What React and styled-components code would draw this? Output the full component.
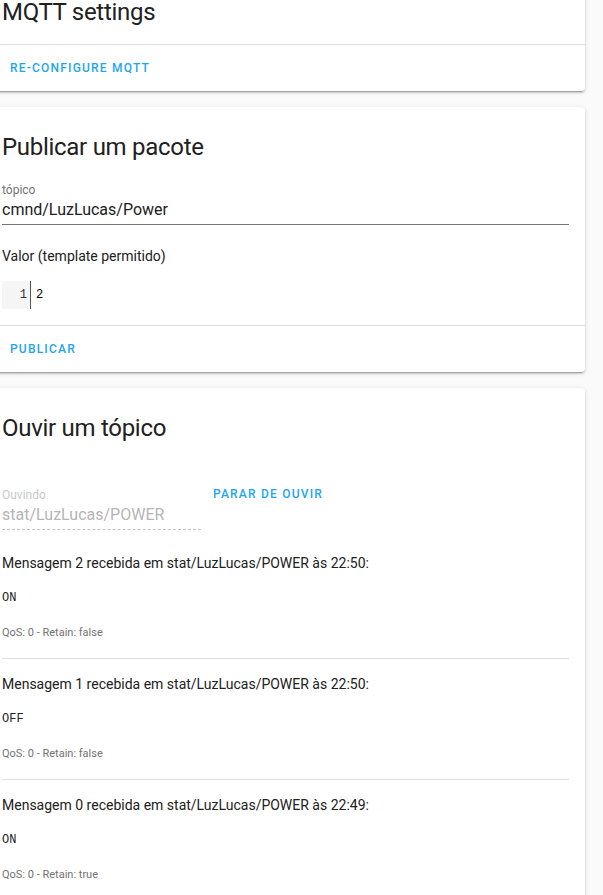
import React from "react";
import styled, { createGlobalStyle } from "styled-components";

const GlobalStyle = createGlobalStyle`
  html, body {
    margin: 0;
    padding: 0;
    background: #fafafa;
  }
  body {
    font-family: Roboto, "Noto Sans", Arial, sans-serif;
    color: #212121;
    overflow: hidden;
    -webkit-font-smoothing: antialiased;
  }
  * { box-sizing: border-box; }
`;

const Page = styled.main`
  display: flex;
  flex-direction: column;
  gap: 16px;
  width: 599px;
  margin: -28px 0 0 -14px;
`;

const Card = styled.section`
  background: #fff;
  border-radius: 4px;
  box-shadow: 0 2px 2px 0 rgba(0, 0, 0, 0.14), 0 1px 5px 0 rgba(0, 0, 0, 0.12),
    0 3px 1px -2px rgba(0, 0, 0, 0.2);
`;

const CardHeader = styled.h2`
  margin: 0;
  padding: 24px 16px 16px;
  font-size: 24px;
  line-height: 32px;
  font-weight: 400;
  letter-spacing: -0.012em;
  color: #212121;
`;

const CardContent = styled.div`
  padding: ${(p) => p.$top || 0}px 16px 16px;
`;

const CardActions = styled.div`
  display: flex;
  border-top: 1px solid #e0e0e0;
  padding: 5px 16px;
`;

const TextButton = styled.button`
  display: inline-flex;
  align-items: center;
  flex: none;
  height: 36px;
  padding: 0 8px;
  border: 0;
  background: transparent;
  font-family: Roboto, "Noto Sans", Arial, sans-serif;
  font-size: 12px;
  font-weight: 500;
  letter-spacing: 1.2px;
  text-transform: uppercase;
  color: #1ea5f0;
  cursor: pointer;
`;

const Field = styled.div`
  width: ${(p) => (p.$width ? `${p.$width}px` : "auto")};
  flex: none;
  padding-top: ${(p) => p.$top}px;
  padding-bottom: 2px;
  border-bottom: 1px ${(p) => (p.$disabled ? "dashed #c4c4c4" : "solid #757575")};
`;

const FieldLabel = styled.div`
  font-size: 12px;
  line-height: 16px;
  color: ${(p) => (p.$disabled ? "#c8c8c8" : "#737373")};
`;

const FieldValue = styled.div`
  font-size: 16px;
  line-height: 24px;
  color: ${(p) => (p.$disabled ? "#b5b5b5" : "#212121")};
  white-space: nowrap;
`;

const SectionLabel = styled.div`
  margin-top: 21px;
  font-size: 14px;
  line-height: 20px;
  color: #212121;
`;

const Editor = styled.div`
  display: flex;
  margin-top: 15px;
  height: 28px;
  font-family: "Liberation Mono", "DejaVu Sans Mono", monospace;
  font-size: 12px;
  line-height: 28px;
  color: #000;
`;

const Gutter = styled.div`
  width: 29px;
  padding-right: 3px;
  text-align: right;
  background: #f5f5f5;
  border-right: 1px solid #555;
  color: #333;
`;

const EditorLine = styled.div`
  padding-left: 5px;
`;

const ListenRow = styled.div`
  display: flex;
  align-items: flex-start;
  gap: 4px;
`;

const Messages = styled.div`
  margin-top: 8px;
`;

const Message = styled.div`
  padding: 13px 0 17px;
  border-top: ${(p) => (p.$first ? "0" : "1px solid #e0e0e0")};
`;

const MessageTitle = styled.div`
  font-size: 14px;
  line-height: 24px;
  color: #212121;
`;

const Payload = styled.pre`
  margin: 15px 0 0;
  font-family: "Liberation Mono", "DejaVu Sans Mono", monospace;
  font-size: 12px;
  line-height: 16px;
  color: #212121;
`;

const MessageMeta = styled.div`
  margin-top: 19px;
  font-size: 11px;
  line-height: 16px;
  color: #737373;
`;

const messages = [
  { id: 2, time: "22:50", payload: "ON", retain: "false" },
  { id: 1, time: "22:50", payload: "OFF", retain: "false" },
  { id: 0, time: "22:49", payload: "ON", retain: "true" },
];

export default function App() {
  return (
    <>
      <GlobalStyle />
      <Page>
        <Card>
          <CardHeader>MQTT settings</CardHeader>
          <CardActions>
            <TextButton>Re-configure MQTT</TextButton>
          </CardActions>
        </Card>

        <Card>
          <CardHeader>Publicar um pacote</CardHeader>
          <CardContent>
            <Field $top={3}>
              <FieldLabel>tópico</FieldLabel>
              <FieldValue>cmnd/LuzLucas/Power</FieldValue>
            </Field>
            <SectionLabel>Valor (template permitido)</SectionLabel>
            <Editor>
              <Gutter>1</Gutter>
              <EditorLine>2</EditorLine>
            </Editor>
          </CardContent>
          <CardActions>
            <TextButton>Publicar</TextButton>
          </CardActions>
        </Card>

        <Card>
          <CardHeader>Ouvir um tópico</CardHeader>
          <CardContent $top={16}>
            <ListenRow>
              <Field $top={11} $width={199} $disabled>
                <FieldLabel $disabled>Ouvindo</FieldLabel>
                <FieldValue $disabled>stat/LuzLucas/POWER</FieldValue>
              </Field>
              <TextButton>Parar de ouvir</TextButton>
            </ListenRow>
            <Messages>
              {messages.map((m, i) => (
                <Message key={m.id} $first={i === 0}>
                  <MessageTitle>
                    Mensagem {m.id} recebida em stat/LuzLucas/POWER às {m.time}:
                  </MessageTitle>
                  <Payload>{m.payload}</Payload>
                  <MessageMeta>QoS: 0 - Retain: {m.retain}</MessageMeta>
                </Message>
              ))}
            </Messages>
          </CardContent>
        </Card>
      </Page>
    </>
  );
}
